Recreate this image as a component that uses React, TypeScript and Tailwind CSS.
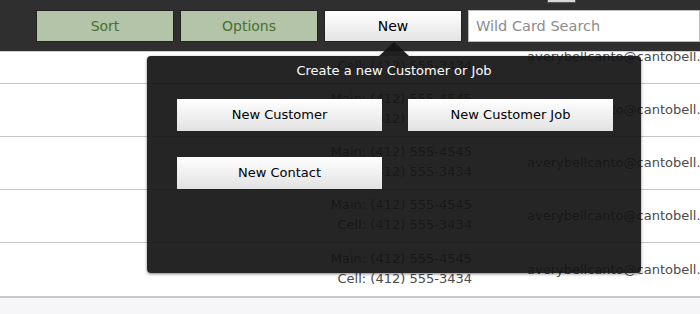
import React from "react";

const rows = [0, 1, 2, 3, 4];

export default function App() {
  return (
    <div className="relative w-[700px] h-[314px] overflow-hidden bg-[#f6f6f8] font-['DejaVu_Sans',sans-serif]">
      {/* top toolbar */}
      <div className="relative z-10 h-[52px] bg-[#2f2f2f] border-b border-[#cfcfcf] flex items-start gap-[6px] pt-[10px] pl-[36px]">
        <div className="absolute left-[547px] top-0 w-[29px] h-[3px] bg-[#d8d8d8] border-x border-b border-[#555]" />
        <button className="w-[138px] h-[32px] bg-[#b3c4a9] border border-[#222] text-[#47702f] text-[14px]">
          Sort
        </button>
        <button className="w-[138px] h-[32px] bg-[#b3c4a9] border border-[#222] text-[#47702f] text-[14px]">
          Options
        </button>
        <button className="w-[138px] h-[32px] bg-gradient-to-b from-white to-[#e4e4e4] border border-[#222] text-black text-[14px]">
          New
        </button>
        <input
          className="flex-1 min-w-0 h-[32px] bg-white border border-[#bbb] px-[7px] text-[14.5px] placeholder:text-[#8c8c8c] outline-none"
          placeholder="Wild Card Search"
        />
      </div>

      {/* list, scrolled under the toolbar */}
      <div className="-mt-[21px] bg-white border-b-2 border-[#c8c8c8]">
        {rows.map((i) => (
          <div key={i} className="h-[53px] flex items-center border-b border-[#c4c4c4] last:border-b-0 text-[13px] text-[#4a4a4a]">
            <div className="w-[472px] shrink-0 text-right leading-[20px] -mt-[2px]">
              <div>Main: (412) 555-4545</div>
              <div>Cell: (412) 555-3434</div>
            </div>
            <div className="pl-[55px] whitespace-nowrap">averybellcanto@cantobell.com</div>
          </div>
        ))}
      </div>

      {/* popover */}
      <div className="absolute left-[147px] top-[56px] w-[494px] h-[217px] rounded-[4px] bg-[rgba(20,20,20,0.93)] shadow-[0_1px_3px_rgba(0,0,0,0.5)] z-20">
        <div className="absolute -top-[14px] left-[232px] w-0 h-0 border-l-[15px] border-r-[15px] border-b-[14px] border-l-transparent border-r-transparent border-b-[rgba(20,20,20,0.95)]" />
        <div className="pt-[6px] text-center text-white text-[13px] leading-[18px]">
          Create a new Customer or Job
        </div>
        <div className="grid grid-cols-[205px_205px] gap-x-[26px] gap-y-[26px] pl-[30px] pt-[19px]">
          <button className="h-[32px] bg-gradient-to-b from-white to-[#e2e2e2] text-black text-[13px]">
            New Customer
          </button>
          <button className="h-[32px] bg-gradient-to-b from-white to-[#e2e2e2] text-black text-[13px]">
            New Customer Job
          </button>
          <button className="h-[32px] bg-gradient-to-b from-white to-[#e2e2e2] text-black text-[13px]">
            New Contact
          </button>
        </div>
      </div>
    </div>
  );
}
